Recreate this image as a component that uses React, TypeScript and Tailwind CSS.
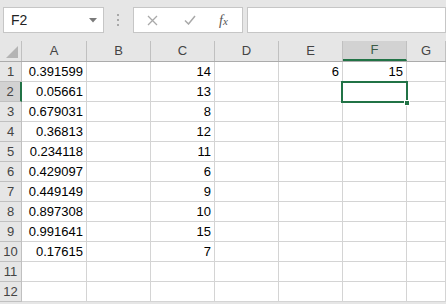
import React from 'react'

const colA = ['0.391599', '0.05661', '0.679031', '0.36813', '0.234118', '0.429097', '0.449149', '0.897308', '0.991641', '0.17615']
const colC = ['14', '13', '8', '12', '11', '6', '9', '10', '15', '7']
const cols = ['A', 'B', 'C', 'D', 'E', 'F', 'G']
const widths = ['w-[65px]', 'w-[64px]', 'w-[64px]', 'w-[64px]', 'w-[64px]', 'w-[64px]', 'flex-1']

function cellValue(row: number, col: number): string {
  if (col === 0) return colA[row - 1] ?? ''
  if (col === 2) return colC[row - 1] ?? ''
  if (row === 1 && col === 4) return '6'
  if (row === 1 && col === 5) return '15'
  return ''
}

export default function App() {
  const rows = Array.from({ length: 12 }, (_, i) => i + 1)

  return (
    <div
      className="relative h-[304px] w-[446px] overflow-hidden bg-[#e6e6e6]"
      style={{ fontFamily: '"Liberation Sans", Arial, sans-serif' }}
    >
      {/* formula bar */}
      <div className="flex h-[41px] items-start pt-[7px]">
        <div className="ml-[3px] flex h-[26px] w-[101px] items-center justify-between border border-[#c6c6c6] bg-white pl-[7px] pr-[6px] text-[14px] text-[#222]">
          <span>F2</span>
          <svg width="8" height="5" viewBox="0 0 8 5">
            <path d="M0 0h8L4 4.5z" fill="#7a7a7a" />
          </svg>
        </div>
        <div className="ml-[13px] flex h-[26px] flex-col items-center justify-center gap-[3px]">
          <span className="size-[2px] bg-[#a8a8a8]" />
          <span className="size-[2px] bg-[#a8a8a8]" />
          <span className="size-[2px] bg-[#a8a8a8]" />
        </div>
        <div className="ml-[14px] flex h-[26px] w-[110px] items-center border border-[#c6c6c6] bg-white">
          <svg className="ml-[13px]" width="11" height="11" viewBox="0 0 11 11">
            <path d="M1 1l9 9M10 1l-9 9" stroke="#a9a9a9" strokeWidth="1.3" />
          </svg>
          <svg className="ml-[26px]" width="12" height="10" viewBox="0 0 12 10">
            <path d="M1 5.5l3.5 3.5L11 1" stroke="#a9a9a9" strokeWidth="1.5" fill="none" />
          </svg>
          <span
            className="ml-[23px] text-[14px] italic text-[#555]"
            style={{ fontFamily: '"Liberation Serif", "Times New Roman", serif' }}
          >
            f<span className="text-[11px]">x</span>
          </span>
        </div>
        <div className="ml-[4px] h-[26px] flex-1 border border-[#c6c6c6] bg-white" />
      </div>

      {/* column headers */}
      <div className="flex h-[21px] border-b border-[#ababab] bg-[#e6e6e6] text-[13px] text-[#444]">
        <div className="relative w-[22px] border-r border-[#c0c0c0]">
          <svg className="absolute bottom-[3px] right-[3px]" width="12" height="12" viewBox="0 0 12 12">
            <path d="M12 0v12H0z" fill="#b4b4b4" />
          </svg>
        </div>
        {cols.map((c, i) => (
          <div
            key={c}
            className={`${widths[i]} flex items-center justify-center border-r border-[#c0c0c0] ${
              c === 'F' ? 'border-b-2 border-b-[#217346] bg-[#d2d2d2] text-[#3b5b47]' : ''
            }`}
          >
            {c}
          </div>
        ))}
      </div>

      {/* grid */}
      <div className="bg-white">
        {rows.map(r => (
          <div key={r} className="flex h-[20px] text-[13px]">
            <div
              className={`flex w-[22px] items-center justify-center border-b border-r border-[#c0c0c0] text-[#444] ${
                r === 2 ? 'border-r-2 border-r-[#217346] bg-[#d2d2d2]' : 'bg-[#e6e6e6]'
              }`}
            >
              {r}
            </div>
            {cols.map((c, i) => (
              <div
                key={c}
                className={`${widths[i]} flex items-center justify-end border-b border-r border-[#d4d4d4] pr-[3px] text-black`}
              >
                {cellValue(r, i)}
              </div>
            ))}
          </div>
        ))}
      </div>

      {/* selection F2 */}
      <div className="pointer-events-none absolute left-[341px] top-[81px] h-[22px] w-[67px] border-2 border-[#217346]" />
      <div className="absolute left-[404px] top-[100px] size-[6px] border border-white bg-[#217346]" />
    </div>
  )
}
